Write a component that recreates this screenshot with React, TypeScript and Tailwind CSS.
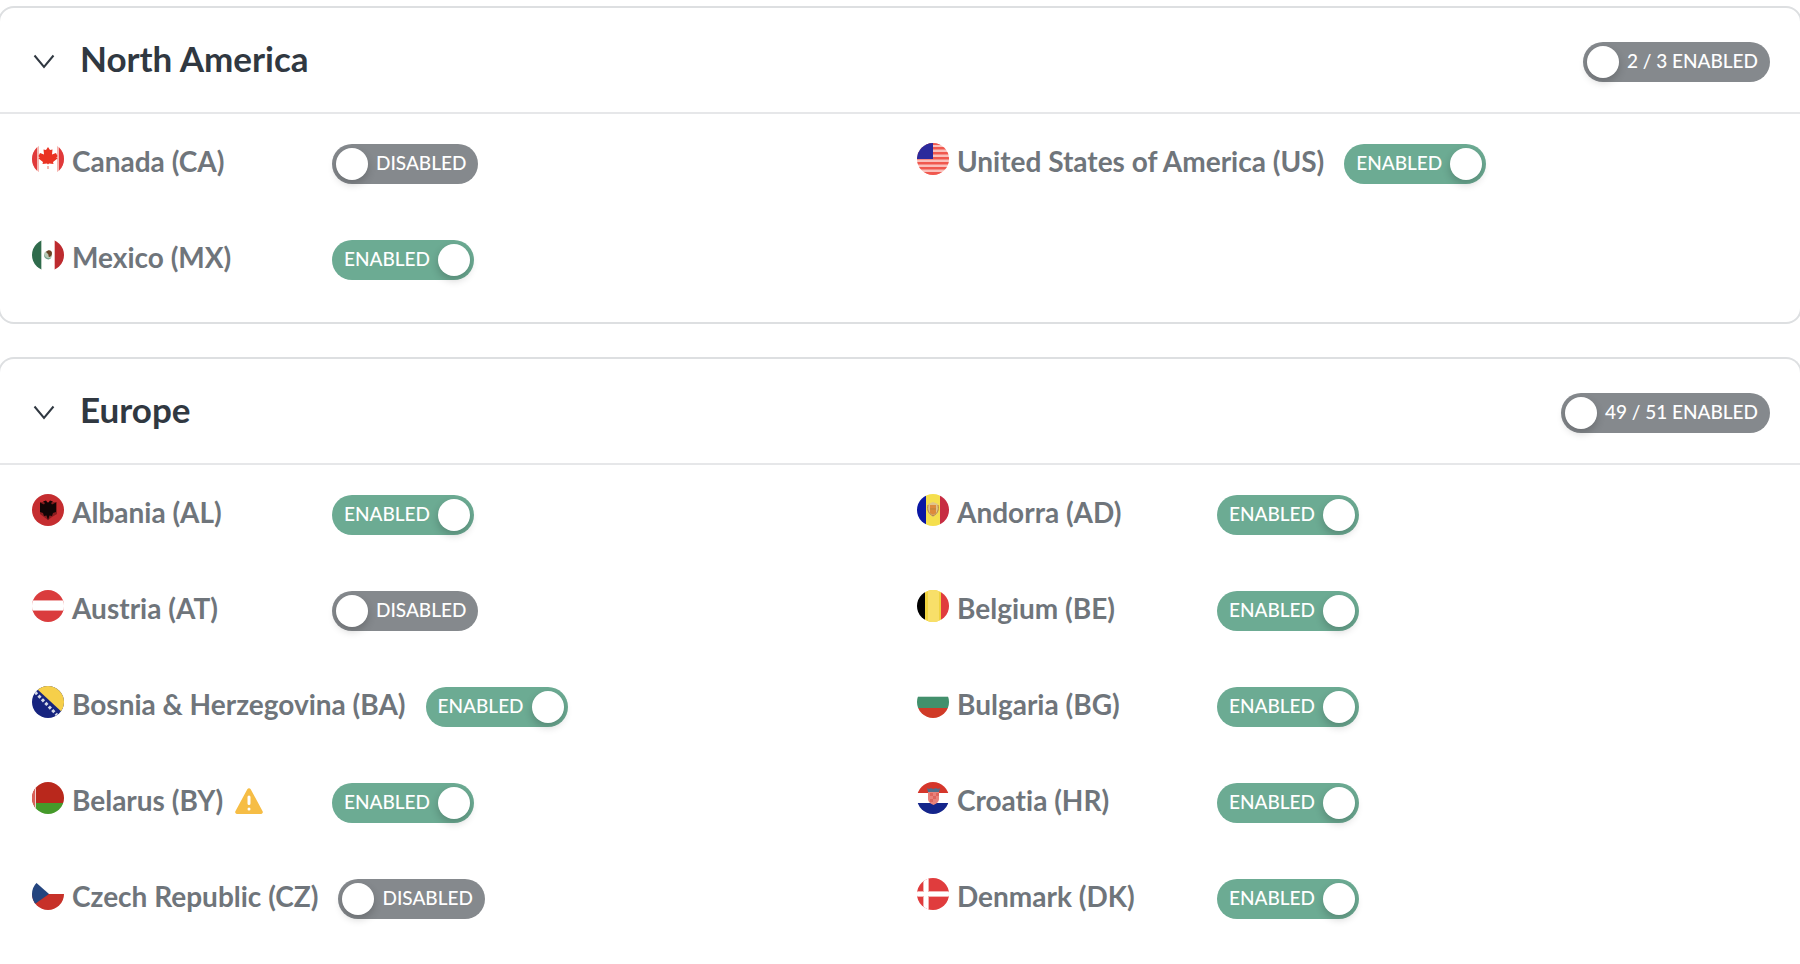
import React, { useState } from 'react';

type Country = {
  code: string;
  name: string;
  enabled: boolean;
  warning?: boolean;
};

type Region = {
  name: string;
  total: number;
  enabledCount: number;
  countries: Country[];
};

const REGIONS: Region[] = [
  {
    name: 'North America',
    total: 3,
    enabledCount: 2,
    countries: [
      { code: 'CA', name: 'Canada', enabled: false },
      { code: 'US', name: 'United States of America', enabled: true },
      { code: 'MX', name: 'Mexico', enabled: true },
    ],
  },
  {
    name: 'Europe',
    total: 51,
    enabledCount: 49,
    countries: [
      { code: 'AL', name: 'Albania', enabled: true },
      { code: 'AD', name: 'Andorra', enabled: true },
      { code: 'AT', name: 'Austria', enabled: false },
      { code: 'BE', name: 'Belgium', enabled: true },
      { code: 'BA', name: 'Bosnia & Herzegovina', enabled: true },
      { code: 'BG', name: 'Bulgaria', enabled: true },
      { code: 'BY', name: 'Belarus', enabled: true, warning: true },
      { code: 'HR', name: 'Croatia', enabled: true },
      { code: 'CZ', name: 'Czech Republic', enabled: false },
      { code: 'DK', name: 'Denmark', enabled: true },
    ],
  },
];

// Flag artwork on a 32x32 canvas, clipped to a circle by <Flag />
const FLAGS: Record<string, React.ReactNode> = {
  CA: (
    <>
      <path fill="#f6b5b0" d="M0 0h7v32H0zM25 0h7v32h-7z" />
      <path fill="#e0393a" d="M0 0h5v32H0zM27 0h5v32h-5z" />
      <path
        fill="#ea3323"
        d="M16 4l2 3 2.500-.5-.5 5 4-1.500 1.500 3-1 1.500 1 1-4.500 3.500.5 2-4.500-.5-1 1-1-1-4.500.5.5-2L6.500 15.500l1-1-1-1.500L8 10l4 1.500-.5-5L14 7z"
      />
      <path fill="#f6b5b0" d="M15 23h2v3h-2z" />
    </>
  ),
  US: (
    <>
      <path fill="#fac0bb" d="M0 0h32v32H0z" />
      <path
        fill="#f0584e"
        d="M0 0h32v2H0zM0 4h32v2.500H0zM0 9h32v2.500H0zM0 14h32v2.500H0zM0 19h32v2.500H0zM0 24h32v2.500H0zM0 29h32v3H0z"
      />
      <path fill="#2b2a9c" d="M0 0h16v16H0z" />
    </>
  ),
  MX: (
    <>
      <path fill="#2f6b4c" d="M0 0h9v32H0z" />
      <path fill="#bd2b2f" d="M23 0h9v32h-9z" />
      <path fill="#b9cdbf" d="M9 0h1v32H9z" />
      <path fill="#ecbcbc" d="M22 0h1v32h-1z" />
      <circle cx="16" cy="16" r="4" fill="#b7c9b6" />
      <path fill="#6b4426" d="M14 13c2-3 6-2 6 1 0 2-1 4-3 4-1-1 0-2-1-3z" />
      <path fill="#6fa08a" d="M12 15c1 3 3 5 7 4-2 3-7 1-7-4z" />
    </>
  ),
  AL: (
    <>
      <path fill="#c52d30" d="M0 0h32v32H0z" />
      <path fill="#5d1013" opacity=".6" d="M8 8h17v12l-5 3-4 3-4-3-4-3z" />
      <path
        fill="#120506"
        d="M16 9l2-2.500 3 1-2 1.500 1 1.500L24 8.500V18l-3 1-1 3-2.500-.5L16 26l-1.500-4.500L12 22l-1-3-3-1V8.500l4 2L13 9l-2-1.500 3-1z"
      />
    </>
  ),
  AT: (
    <>
      <path fill="#da3c3d" d="M0 0h32v32H0z" />
      <path fill="#efaaaa" d="M0 10h32v11H0z" />
      <path fill="#fff" d="M0 11h32v9H0z" />
    </>
  ),
  BA: (
    <>
      <path fill="#17247f" d="M0 0h32v32H0z" />
      <path fill="#f6cf4a" d="M5 0h27v28L5 3z" />
      <path
        stroke="#d5dae9"
        strokeWidth="3"
        strokeDasharray="3 2"
        fill="none"
        d="M3 6l22 23"
      />
    </>
  ),
  BY: (
    <>
      <path fill="#b9281c" d="M0 0h32v21H0z" />
      <path fill="#459a2a" d="M0 21h32v11H0z" />
      <path fill="#d9615a" d="M0 0h4v32H0z" />
      <path stroke="#f2cfcc" d="M3.500 0v32" />
    </>
  ),
  CZ: (
    <>
      <path fill="#c73129" d="M0 16h32v16H0z" />
      <path fill="#24457f" d="M0 1l17 15L0 28z" />
    </>
  ),
  AD: (
    <>
      <path fill="#0a17a4" d="M0 0h9v32H0z" />
      <path fill="#f5df4d" d="M9 0h14v32H9z" />
      <path fill="#c72d42" d="M23 0h9v32h-9z" />
      <path fill="#e0c48a" d="M11 10l5-2 5 2v9l-5 4-5-4z" />
      <path fill="#dd8a3c" d="M13 11h6v8l-3 2-3-2z" />
      <path stroke="#b5813f" fill="none" d="M11 11c-1 5 0 8 5 11 5-3 6-6 5-11M13 15h6" />
    </>
  ),
  BE: (
    <>
      <path fill="#000" d="M0 0h8v32H0z" />
      <path fill="#f0d33f" d="M8 0h16v32H8z" />
      <path fill="#f8df69" d="M11 0h11v32H11z" />
      <path fill="#e03c3d" d="M24 0h8v32h-8z" />
    </>
  ),
  BG: (
    <>
      <path fill="#c9dfd5" d="M0 10h32v1H0z" />
      <path fill="#42906c" d="M0 11h32v11H0z" />
      <path fill="#d03a27" d="M0 22h32v10H0z" />
    </>
  ),
  HR: (
    <>
      <path fill="#d5362b" d="M0 0h32v11H0z" />
      <path fill="#14258b" d="M0 21h32v11H0z" />
      <path fill="#e9827b" d="M11 9h11v8c0 3-3 5-5.500 6-2.500-1-5.500-3-5.500-6z" />
      <path fill="#de655e" d="M13 11h3v3h-3zM19 11h3v3h-3zM16 14h3v3h-3zM13 17h3v3h-3z" />
      <path fill="#4f6f8d" d="M10 6l2 1 2-1 2 1 3-1 2 1 2-1-1 4H11z" />
    </>
  ),
  DK: (
    <>
      <path fill="#e03c3d" d="M0 0h32v32H0z" />
      <path fill="#f3b3b3" d="M6 0h6v32H6zM0 13h32v6H0z" />
      <path fill="#fff" d="M7 0h4v32H7zM0 14h32v4H0z" />
    </>
  ),
};

function Flag({ code }: { code: string }) {
  return (
    <svg viewBox="0 0 32 32" className="size-8 shrink-0 rounded-full" aria-hidden="true">
      {FLAGS[code]}
    </svg>
  );
}

function WarningIcon() {
  return (
    <svg viewBox="0 0 28 26" className="mt-1.5 ml-1 h-[26px] w-7 shrink-0" aria-hidden="true">
      <path
        fill="#f6bd45"
        d="M12.300 1.200a2 2 0 0 1 3.400 0l11.900 22a1.900 1.900 0 0 1-1.700 2.800H2.100a1.900 1.900 0 0 1-1.700-2.800z"
      />
      <path stroke="#fff" strokeWidth="3" strokeLinecap="round" d="M14 9v6.500M14 21v.1" />
    </svg>
  );
}

type ToggleProps = {
  name: string;
  text: string;
  checked: boolean;
  onChange: (checked: boolean) => void;
};

// Pill switch: the checkbox itself is drawn as the round thumb
function Toggle({ name, text, checked, onChange }: ToggleProps) {
  return (
    <label
      className={`flex h-10 shrink-0 cursor-pointer items-center gap-2 rounded-full text-[19px] font-medium text-white ${
        checked ? 'flex-row-reverse bg-[#6cab93] pr-1 pl-3' : 'bg-[#85898d] pr-3 pl-1'
      }`}
    >
      <input
        type="checkbox"
        aria-label={name}
        checked={checked}
        onChange={(e) => onChange(e.target.checked)}
        className="size-8 cursor-pointer appearance-none rounded-full bg-white shadow-[0_4px_8px_rgba(0,0,0,0.2)]"
      />
      <span className="pb-0.5">{text}</span>
    </label>
  );
}

function CountryRow({ country }: { country: Country }) {
  const [enabled, setEnabled] = useState(country.enabled);

  return (
    <li className="flex h-24 items-start gap-5 pt-[29px]">
      <div className="flex min-w-[280px] items-start gap-2">
        <Flag code={country.code} />
        <span className="text-[28px] leading-9 font-bold text-[#6f757b]">
          {country.name} ({country.code})
        </span>
        {country.warning && <WarningIcon />}
      </div>
      <div className="pt-px">
        <Toggle
          name={country.name}
          text={enabled ? 'ENABLED' : 'DISABLED'}
          checked={enabled}
          onChange={setEnabled}
        />
      </div>
    </li>
  );
}

function RegionCard({ region }: { region: Region }) {
  const [open, setOpen] = useState(true);
  const [all, setAll] = useState(false);

  return (
    <section className="-mx-0.5 rounded-2xl border-2 border-[#dddfe1] last:rounded-b-none last:border-b-0">
      <header className="flex h-[106px] items-center justify-between border-b-2 border-[#e6e7e9] pr-[30px] pl-8">
        <button
          type="button"
          aria-expanded={open}
          onClick={() => setOpen(!open)}
          className="flex cursor-pointer items-center gap-6 text-[#303841]"
        >
          <svg viewBox="0 0 24 24" className="mt-1 size-6" fill="none" aria-hidden="true">
            <path stroke="currentColor" strokeWidth="2" d="M2.500 5.500l9.500 11.500L21.500 5.500" />
          </svg>
          <h2 className="pb-1 text-[35px] leading-10 font-bold">{region.name}</h2>
        </button>
        <div className="pt-1">
          <Toggle
            name={`All of ${region.name}`}
            text={`${region.enabledCount} / ${region.total} ENABLED`}
            checked={all}
            onChange={setAll}
          />
        </div>
      </header>
      {open && (
        <ul className="grid grid-cols-2 gap-x-[34px] px-8 pb-4">
          {region.countries.map((country) => (
            <CountryRow key={country.code} country={country} />
          ))}
        </ul>
      )}
    </section>
  );
}

export default function App() {
  return (
    <main className="flex min-h-screen flex-col gap-[33px] overflow-hidden bg-white pt-1.5 font-['Lato',sans-serif] [font-variant-ligatures:none]">
      {REGIONS.map((region) => (
        <RegionCard key={region.name} region={region} />
      ))}
    </main>
  );
}
